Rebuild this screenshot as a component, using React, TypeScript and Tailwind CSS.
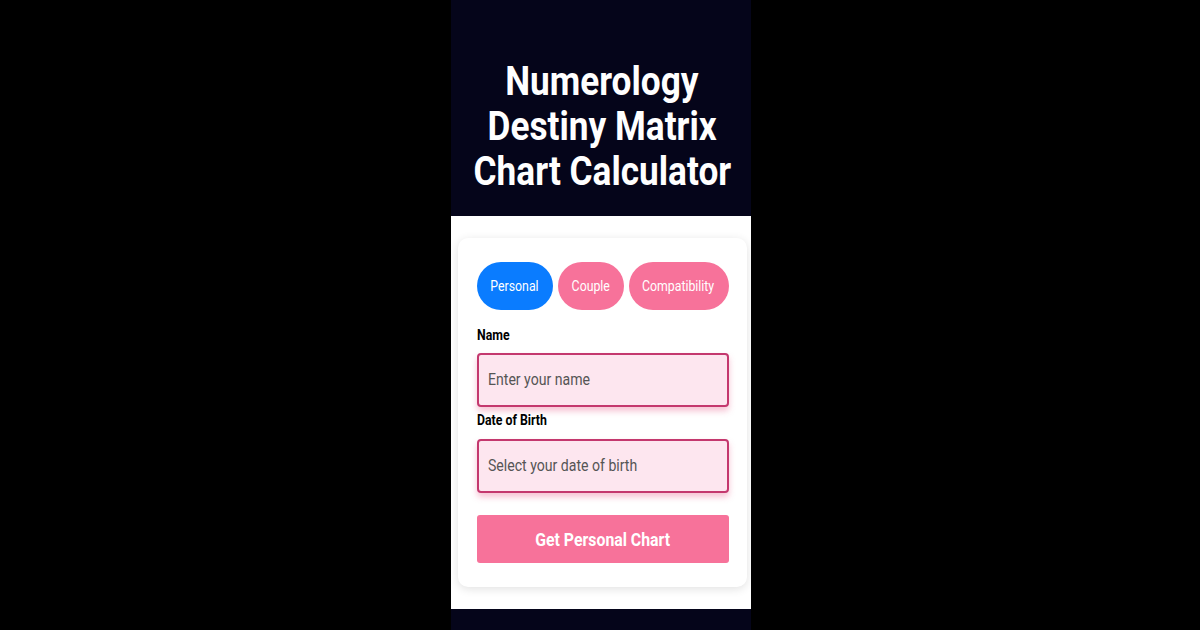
import React from "react";

function N({ children, left }: { children: React.ReactNode; left?: boolean }) {
  return (
    <span className={"inline-block whitespace-nowrap scale-x-[0.88] " + (left ? "origin-left" : "origin-center")}>{children}</span>
  );
}

export default function App() {
  return (
    <div className="w-[1200px] h-[630px] bg-black flex justify-center overflow-hidden" style={{ fontFamily: "Roboto, 'Liberation Sans', sans-serif" }}>
      <div className="ml-px w-[300px] h-full flex flex-col bg-[#05051a]">
        <div className="h-[216px] shrink-0 flex items-center justify-center">
          <h1 className="text-white font-bold text-[40px] leading-[45px] text-center mt-[36px] ml-[3px] flex flex-col items-center">
            <N>Numerology</N>
            <N>Destiny Matrix</N>
            <N>Chart Calculator</N>
          </h1>
        </div>
        <div className="h-[393px] shrink-0 bg-white pl-[7px] pr-[4px] pt-[22px]">
          <div className="rounded-[10px] bg-white shadow-[0_2px_10px_rgba(0,0,0,0.12)] pl-[19px] pr-[18px] pt-[24px] pb-[24px]">
            <div className="flex gap-[5px]">
              <button className="h-[48px] w-[76px] shrink-0 rounded-full bg-[#0a7cff] text-white text-[14px]"><N>Personal</N></button>
              <button className="h-[48px] w-[66px] shrink-0 rounded-full bg-[#f7729a] text-white text-[14px]"><N>Couple</N></button>
              <button className="h-[48px] w-[100px] shrink-0 rounded-full bg-[#f7729a] text-white text-[14px]"><N>Compatibility</N></button>
            </div>
            <div className="mt-[15px] text-[14px] font-bold text-black leading-[20px]"><N left>Name</N></div>
            <div className="mt-[8px] h-[54px] rounded-[4px] border-2 border-[#c4386e] bg-[#fde6ef] shadow-[0_4px_6px_rgba(230,80,130,0.35)] flex items-center px-[9px] text-[16px] text-[#555]"><N left>Enter your name</N></div>
            <div className="mt-[3px] text-[14px] font-bold text-black leading-[20px]"><N left>Date of Birth</N></div>
            <div className="mt-[9px] h-[54px] rounded-[4px] border-2 border-[#c4386e] bg-[#fde6ef] shadow-[0_4px_6px_rgba(230,80,130,0.35)] flex items-center px-[9px] text-[16px] text-[#555]"><N left>Select your date of birth</N></div>
            <button className="mt-[22px] w-full h-[48px] rounded-[3px] bg-[#f7729a] text-white font-bold text-[18px]"><N>Get Personal Chart</N></button>
          </div>
        </div>
        <div className="flex-1" />
      </div>
    </div>
  );
}
